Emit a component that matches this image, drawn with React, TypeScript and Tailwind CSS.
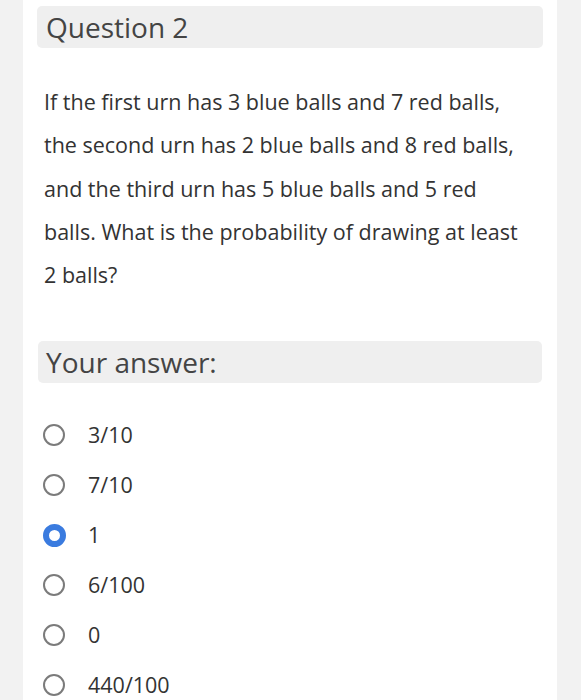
import React from "react";

const options = ["3/10", "7/10", "1", "6/100", "0", "440/100"];
const selected = 2;

export default function App() {
  return (
    <div
      className="min-h-[700px] bg-[#f2f2f2] flex overflow-hidden"
      style={{ fontFamily: '"Open Sans", "Noto Sans", sans-serif' }}
    >
      <div className="ml-[23px] w-[534px] bg-white pt-[6px] h-[700px] overflow-hidden">
        <div className="mx-[14px] h-[42px] rounded-[5px] bg-[#efefef] px-[9px] text-[28px] leading-[42px] text-[#444444]">
          Question 2
        </div>
        <p className="mt-[32px] px-[21px] text-[21.5px] leading-[43.25px] text-[#333333] whitespace-nowrap">
          If the first urn has 3 blue balls and 7 red balls,
          <br />
          the second urn has 2 blue balls and 8 red balls,
          <br />
          and the third urn has 5 blue balls and 5 red
          <br />
          balls. What is the probability of drawing at least
          <br />
          2 balls?
        </p>
        <div className="mt-[45px] mx-[15px] h-[42px] rounded-[5px] bg-[#efefef] px-[8px] text-[28px] leading-[42px] text-[#444444]">
          Your answer:
        </div>
        <div className="mt-[27px] flex flex-col">
          {options.map((o, i) => (
            <div key={o} className="flex h-[50px] items-center pl-[20px]">
              {i === selected ? (
                <span className="box-border h-[23px] w-[23px] rounded-full border-[6px] border-[#3a7bdf] bg-white" />
              ) : (
                <span className="box-border h-[22px] w-[22px] rounded-full border-2 border-[#7b7b7b] bg-white" />
              )}
              <span className={(i === selected ? "ml-[22px]" : "ml-[23px]") + " text-[21.5px] leading-[50px] text-[#333333]"}>{o}</span>
            </div>
          ))}
        </div>
      </div>
    </div>
  );
}
